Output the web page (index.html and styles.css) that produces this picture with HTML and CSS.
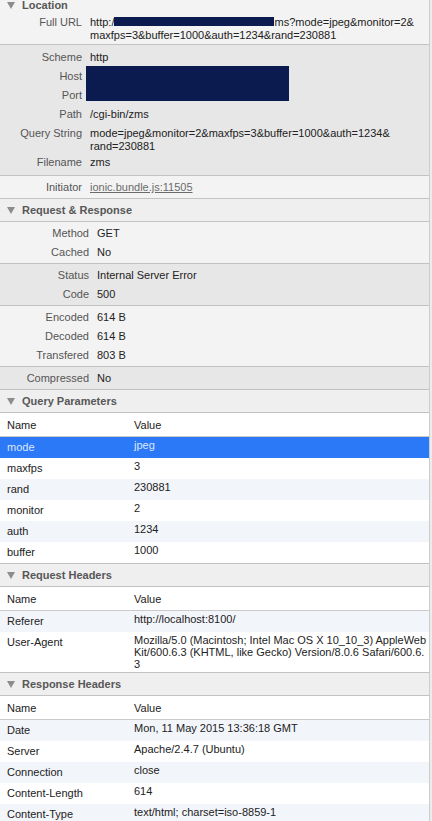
FILE: index.html
```html
<!DOCTYPE html>
<html lang="en">
<head>
<meta charset="utf-8">
<title>Request details</title>
<link rel="stylesheet" href="styles.css">
</head>
<body>
<div class="panel">

  <section class="sec sec--loc">
    <div class="sec-head sec-head--first"><svg class="tri" viewBox="0 0 8 7"><polygon points="0,0 8,0 4,7"/></svg><span>Location</span></div>
    <div class="grp grp--light grp--url">
      <div class="kv kv--url">
        <div class="k">Full URL</div>
        <div class="v"><span class="ln">http:/<span class="redact redact--url"></span>ms?mode=jpeg&amp;monitor=2&amp;</span><span class="ln">maxfps=3&amp;buffer=1000&amp;auth=1234&amp;rand=230881</span></div>
      </div>
    </div>
    <div class="grp grp--dark grp--loc">
      <div class="kv"><div class="k">Scheme</div><div class="v">http</div></div>
      <div class="kv-pair">
        <div class="kcol"><div class="k">Host</div><div class="k">Port</div></div>
        <div class="redact redact--host"></div>
      </div>
      <div class="kv"><div class="k">Path</div><div class="v">/cgi-bin/zms</div></div>
      <div class="kv kv--multi"><div class="k">Query String</div><div class="v"><span class="ln">mode=jpeg&amp;monitor=2&amp;maxfps=3&amp;buffer=1000&amp;auth=1234&amp;</span><span class="ln">rand=230881</span></div></div>
      <div class="kv"><div class="k">Filename</div><div class="v">zms</div></div>
    </div>
    <div class="grp grp--light">
      <div class="kv"><div class="k">Initiator</div><div class="v"><span class="link">ionic.bundle.js:11505</span></div></div>
    </div>
  </section>

  <section class="sec sec--rr">
    <div class="sec-head"><svg class="tri" viewBox="0 0 8 7"><polygon points="0,0 8,0 4,7"/></svg><span>Request &amp; Response</span></div>
    <div class="grp grp--light">
      <div class="kv"><div class="k">Method</div><div class="v">GET</div></div>
      <div class="kv"><div class="k">Cached</div><div class="v">No</div></div>
    </div>
    <div class="grp grp--dark">
      <div class="kv"><div class="k">Status</div><div class="v">Internal Server Error</div></div>
      <div class="kv"><div class="k">Code</div><div class="v">500</div></div>
    </div>
    <div class="grp grp--light">
      <div class="kv"><div class="k">Encoded</div><div class="v">614 B</div></div>
      <div class="kv"><div class="k">Decoded</div><div class="v">614 B</div></div>
      <div class="kv"><div class="k">Transfered</div><div class="v">803 B</div></div>
    </div>
    <div class="grp grp--dark">
      <div class="kv"><div class="k">Compressed</div><div class="v">No</div></div>
    </div>
  </section>

  <section class="sec">
    <div class="sec-head"><svg class="tri" viewBox="0 0 8 7"><polygon points="0,0 8,0 4,7"/></svg><span>Query Parameters</span></div>
    <div class="tbl">
      <div class="tr tr--head"><div class="tn">Name</div><div class="tv">Value</div></div>
      <div class="tbody">
        <div class="tr tr--sel"><div class="tn">mode</div><div class="tv">jpeg</div></div>
        <div class="tr"><div class="tn">maxfps</div><div class="tv">3</div></div>
        <div class="tr"><div class="tn">rand</div><div class="tv">230881</div></div>
        <div class="tr"><div class="tn">monitor</div><div class="tv">2</div></div>
        <div class="tr"><div class="tn">auth</div><div class="tv">1234</div></div>
        <div class="tr"><div class="tn">buffer</div><div class="tv">1000</div></div>
      </div>
    </div>
  </section>

  <section class="sec">
    <div class="sec-head"><svg class="tri" viewBox="0 0 8 7"><polygon points="0,0 8,0 4,7"/></svg><span>Request Headers</span></div>
    <div class="tbl">
      <div class="tr tr--head"><div class="tn">Name</div><div class="tv">Value</div></div>
      <div class="tbody">
        <div class="tr"><div class="tn">Referer</div><div class="tv">http://localhost:8100/</div></div>
        <div class="tr"><div class="tn">User-Agent</div><div class="tv"><span class="ln">Mozilla/5.0 (Macintosh; Intel Mac OS X 10_10_3) AppleWeb</span><span class="ln">Kit/600.6.3 (KHTML, like Gecko) Version/8.0.6 Safari/600.6.</span><span class="ln">3</span></div></div>
      </div>
    </div>
  </section>

  <section class="sec">
    <div class="sec-head"><svg class="tri" viewBox="0 0 8 7"><polygon points="0,0 8,0 4,7"/></svg><span>Response Headers</span></div>
    <div class="tbl">
      <div class="tr tr--head"><div class="tn">Name</div><div class="tv">Value</div></div>
      <div class="tbody">
        <div class="tr"><div class="tn">Date</div><div class="tv">Mon, 11 May 2015 13:36:18 GMT</div></div>
        <div class="tr"><div class="tn">Server</div><div class="tv">Apache/2.4.7 (Ubuntu)</div></div>
        <div class="tr"><div class="tn">Connection</div><div class="tv">close</div></div>
        <div class="tr"><div class="tn">Content-Length</div><div class="tv">614</div></div>
        <div class="tr"><div class="tn">Content-Type</div><div class="tv">text/html; charset=iso-8859-1</div></div>
      </div>
    </div>
  </section>

</div>
</body>
</html>
```
FILE: styles.css
```css
* { box-sizing: border-box; }

html, body {
  margin: 0;
  padding: 0;
}

body {
  width: 432px;
  height: 821px;
  overflow: hidden;
  background: #ececec;
  font-family: "Liberation Sans", Arial, Helvetica, sans-serif;
  font-size: 11px;
  color: #222;
}

.panel {
  width: 430px;
  margin-top: -6px;
  background: #fff;
  border-right: 1px solid #cdcdcd;
  overflow: hidden;
}

/* section headers */
.sec-head {
  height: 23px;
  display: flex;
  align-items: center;
  padding-left: 7px;
  background: #efefef;
  border-bottom: 1px solid #c2c2c2;
  font-weight: bold;
  color: #575757;
  line-height: 13px;
}

.sec-head--first {
  height: 22px;
  border-bottom: none;
  background: #f3f3f3;
}

.tri {
  width: 8px;
  height: 7px;
  margin-right: 7px;
  fill: #8c8c8c;
  flex: none;
}

/* key / value groups */
.grp {
  padding: 2px 0 1px;
  border-bottom: 1px solid #c2c2c2;
}

.grp--light { background: #f3f3f3; }
.grp--dark { background: #e7e7e7; }
.grp--loc { padding: 3px 0; }
.grp--url { padding: 0; }

.kv {
  display: flex;
  padding: 3px 0;
  line-height: 13px;
}

.kv--multi { padding-bottom: 0; }
.kv--url { padding: 0 0 2px; }

.k {
  flex: none;
  text-align: right;
  color: #555;
}

.sec--loc .k { width: 82px; }
.sec--rr .k { width: 89px; }

.v {
  margin-left: 8px;
  white-space: nowrap;
}

.ln { display: block; }

.kv-pair { display: flex; }

.kcol { flex: none; }

.kcol .k {
  padding: 3px 0;
  line-height: 13px;
}

.redact { background: #0b1a4f; }

.redact--url {
  display: inline-block;
  width: 160px;
  height: 9px;
}

.redact--host {
  width: 203px;
  height: 35px;
  margin: -1px 0 0 4px;
}

.link {
  color: #6b6b6b;
  text-decoration: underline;
}

/* tables */
.tbl {
  background: #fff;
  border-bottom: 1px solid #c2c2c2;
}

.tr {
  display: grid;
  grid-template-columns: 127px 1fr;
  min-height: 21px;
  line-height: 12px;
}

.tn { padding: 4px 0 0 7px; }

.tv {
  padding: 2px 0 2px 7px;
  white-space: nowrap;
}

.tr--head {
  min-height: 24px;
  border-bottom: 1px solid #cacaca;
}

.tr--head .tn,
.tr--head .tv { padding-top: 6px; }

.tbody .tr:nth-child(odd) { background: #f2f5fa; }

.tbody .tr.tr--sel {
  background: #2b79f6;
  color: #dbe7fd;
}
```
